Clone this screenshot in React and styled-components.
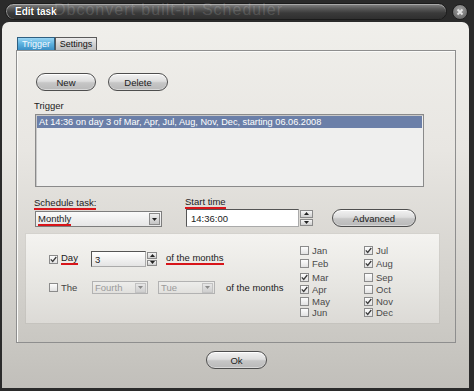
import React from 'react';
import styled, { createGlobalStyle } from 'styled-components';

const Global = createGlobalStyle`
  html, body { margin: 0; padding: 0; background: #2b2b2b; }
  body { font-family: "Liberation Sans", Arial, sans-serif; }
`;

const Window = styled.div`
  width: 474px;
  height: 391px;
  background: #2b2b2b;
  display: flex;
  flex-direction: column;
  overflow: hidden;
  font-family: "Liberation Sans", Arial, sans-serif;
  font-size: 9.5px;
  color: #1c1c1c;
`;

const TitleRow = styled.div`
  position: relative;
  height: 22px;
  box-sizing: border-box;
  display: flex;
  align-items: flex-start;
  padding: 3px 0 0 5px;
  gap: 5px;
`;

const TitlePill = styled.div`
  width: 442px;
  height: 17px;
  box-sizing: border-box;
  border-radius: 9px;
  border: 1px solid #1b1b1b;
  background: linear-gradient(#858585 0%, #5a5a5a 30%, #3a3a3a 60%, #2f2f2f 100%);
  box-shadow: inset 0 1px 0 #a9a9a9, inset 1px 0 0 #8a8a8a;
  display: flex;
  align-items: center;
  padding-left: 9px;
`;

const GhostTitle = styled.span`
  position: absolute;
  left: 54px;
  top: 1px;
  font-size: 16px;
  line-height: 18px;
  letter-spacing: 1px;
  color: rgba(255, 255, 255, 0.15);
  white-space: nowrap;
  pointer-events: none;
`;

const TitleText = styled.span`
  position: relative;
  z-index: 1;
  color: #fff;
  font-weight: bold;
  font-size: 10px;
  text-shadow: 0 0 1px #000;
`;

const CloseButton = styled.div`
  width: 16px;
  height: 16px;
  margin-top: 1px;
  box-sizing: border-box;
  border-radius: 50%;
  border: 1px solid #1e1e1e;
  background: radial-gradient(circle at 50% 35%, #a5a5a5, #6e6e6e 70%, #555);
  display: flex;
  align-items: center;
  justify-content: center;
`;

const Body = styled.div`
  margin-left: 2px;
  width: 467px;
  height: 366px;
  box-sizing: border-box;
  border-radius: 7px 7px 0 0;
  background: linear-gradient(#f0efeb 0%, #e8e6e2 35%, #d4d2cd 70%, #c1bfba 100%);
  padding: 15px 13px 0 14px;
  display: flex;
  flex-direction: column;
`;

const TabStrip = styled.div`
  display: flex;
  padding-left: 1px;
  height: 13px;
`;

const Tab = styled.div`
  height: 13px;
  width: ${p => p.$w}px;
  box-sizing: border-box;
  border: 1px solid ${p => (p.$active ? '#2f5f80' : '#5a5a5a')};
  border-bottom: none;
  text-align: center;
  font-size: 9px;
  line-height: 12px;
  background: ${p =>
    p.$active
      ? 'linear-gradient(#9ad6f4, #5bb0de 50%, #3a8fc6)'
      : 'linear-gradient(#ececec, #d2d2d2 50%, #bdbdbd)'};
  color: ${p => (p.$active ? '#f4fbff' : '#111')};
`;

const Panel = styled.div`
  height: 293px;
  box-sizing: border-box;
  border: 1px solid #8e8e8e;
  box-shadow: inset 1px 1px 0 #fbfbf9;
  padding: 22px 0 0 18px;
  display: flex;
  flex-direction: column;
`;

const ButtonRow = styled.div`
  display: flex;
  gap: 12px;
  margin-left: 1px;
`;

const PillButton = styled.button`
  width: ${p => p.$w}px;
  height: 18px;
  box-sizing: border-box;
  border-radius: 9px;
  border: 1px solid #4e4e4e;
  background: linear-gradient(#f2f2f2 0%, #dedede 45%, #c6c6c6 55%, #b9b9b9 100%);
  box-shadow: inset 0 1px 0 #fff, inset 0 -1px 0 #d8d8d8;
  font-family: inherit;
  font-size: 9.5px;
  color: #222;
  padding: 0;
  cursor: default;
`;

const FieldLabel = styled.div`
  margin-left: -1px;
  line-height: 11px;
  height: 11px;
  margin-top: ${p => p.$mt || 0}px;
`;

const ListBox = styled.div`
  margin-top: 3px;
  width: 389px;
  height: 73px;
  box-sizing: border-box;
  border: 1px solid #8a8a8a;
  box-shadow: inset 1px 1px 0 #c8c8c8;
  background: #efefee;
  padding: 1px;
`;

const ListItem = styled.div`
  height: 12px;
  line-height: 12px;
  padding-left: 2px;
  font-size: 9.2px;
  white-space: nowrap;
  background: ${p => (p.$selected ? '#6b7fa8' : 'transparent')};
  color: ${p => (p.$selected ? '#fff' : '#1c1c1c')};
`;

const FieldsRow = styled.div`
  display: flex;
  align-items: flex-end;
  margin-top: 9px;
`;

const Field = styled.div`
  width: ${p => p.$w}px;
  display: flex;
  flex-direction: column;
`;

const Underlined = styled.span`
  display: inline-block;
  line-height: 10px;
  border-bottom: 2px solid #d8151a;
  padding-bottom: ${p => p.$pb ?? 0}px;
`;

const SelectBox = styled.div`
  width: ${p => p.$w}px;
  height: ${p => p.$h || 15}px;
  box-sizing: border-box;
  margin-top: ${p => p.$mt || 0}px;
  border: 1px solid ${p => (p.$disabled ? '#b2b2b2' : '#7d7d7d')};
  background: ${p =>
    p.$disabled ? 'linear-gradient(#ededeb, #e1e0dd)' : 'linear-gradient(#fafafa, #e6e6e6)'};
  display: flex;
  align-items: center;
  justify-content: space-between;
  padding: 0 1px 0 2px;
  color: ${p => (p.$disabled ? '#9b9b9b' : '#1c1c1c')};
`;

const DropButton = styled.div`
  width: 11px;
  height: ${p => p.$h || 11}px;
  box-sizing: border-box;
  border: 1px solid ${p => (p.$disabled ? '#c2c2c2' : '#8a8a8a')};
  background: ${p =>
    p.$disabled ? 'linear-gradient(#e6e6e6, #cfcfcf)' : 'linear-gradient(#f0f0f0, #c4c4c4)'};
  display: flex;
  align-items: center;
  justify-content: center;
`;

const SpinBox = styled.div`
  width: ${p => p.$w}px;
  height: ${p => p.$h}px;
  box-sizing: border-box;
  display: flex;
  margin-top: ${p => p.$mt || 0}px;
`;

const SpinInput = styled.div`
  flex: 1;
  box-sizing: border-box;
  border: 1px solid #555;
  border-right-color: #aaa;
  border-bottom-color: #aaa;
  background: ${p => p.$bg || '#fff'};
  padding-left: ${p => p.$pl || 3}px;
  display: flex;
  align-items: center;
`;

const SpinButtons = styled.div`
  width: ${p => p.$w}px;
  display: flex;
  flex-direction: column;
  gap: 1px;
  padding: 1px 0 1px 1px;
  box-sizing: border-box;
`;

const SpinArrow = styled.div`
  flex: 1;
  box-sizing: border-box;
  border: 1px solid #8a8a8a;
  background: linear-gradient(#f6f6f6, #cfcfcf);
  display: flex;
  align-items: center;
  justify-content: center;
`;

const Group = styled.div`
  margin: 7px 0 0 -9px;
  width: 413px;
  height: 89px;
  box-sizing: border-box;
  background: linear-gradient(#f4f3f0, #e6e5e1 60%, #dcdad6);
  box-shadow: 0 0 0 1px rgba(0, 0, 0, 0.03);
  display: flex;
  padding: 12px 0 0 23px;
`;

const LeftArea = styled.div`
  width: 251px;
  display: flex;
  flex-direction: column;
  padding-top: 5px;
  gap: 14px;
`;

const OptionRow = styled.div`
  display: flex;
  align-items: center;
  height: ${p => p.$h}px;
`;

const CheckItem = styled.div`
  display: flex;
  align-items: center;
  gap: 3px;
  width: ${p => (p.$w ? `${p.$w}px` : 'auto')};
  height: ${p => (p.$h ? `${p.$h}px` : 'auto')};
  color: ${p => (p.$muted ? '#444' : 'inherit')};
  line-height: 10px;
`;

const Box = styled.span`
  width: 9px;
  height: 9px;
  flex: none;
  box-sizing: border-box;
  border: 1px solid #8b8b8b;
  background: linear-gradient(#fdfdfd, #e2e2e2);
  display: flex;
  align-items: center;
  justify-content: center;
`;

const Spacer = styled.span`
  width: ${p => p.$w}px;
  flex: none;
`;

const PlainText = styled.span`
  white-space: nowrap;
`;

const MonthGrid = styled.div`
  display: grid;
  grid-auto-flow: column;
  grid-template-rows: 13px 14px 12px 12px 11px 12px;
  grid-template-columns: 64px auto;
  color: #4a4a4a;
`;

const Footer = styled.div`
  display: flex;
  justify-content: center;
  padding-top: 8px;
  padding-left: 1px;
`;

const Check = () => (
  <svg width="7" height="7" viewBox="0 0 7 7">
    <path d="M0.8 3.4 L2.7 5.4 L6.3 1" fill="none" stroke="#3a3a3a" strokeWidth="1.3" />
  </svg>
);

const CheckBox = ({ checked }) => <Box>{checked ? <Check /> : null}</Box>;

const Tri = ({ up, color = '#222' }) => (
  <svg width="5" height="3" viewBox="0 0 5 3">
    <path d={up ? 'M0 3 L2.5 0 L5 3 Z' : 'M0 0 L5 0 L2.5 3 Z'} fill={color} />
  </svg>
);

const Dropdown = ({ w, h, mt, disabled, children, btnH }) => (
  <SelectBox $w={w} $h={h} $mt={mt} $disabled={disabled}>
    <span>{children}</span>
    <DropButton $disabled={disabled} $h={btnH}>
      <Tri color={disabled ? '#8a8a8a' : '#222'} />
    </DropButton>
  </SelectBox>
);

const Spinner = ({ w, h, mt, btnW, bg, pl, children }) => (
  <SpinBox $w={w} $h={h} $mt={mt}>
    <SpinInput $bg={bg} $pl={pl}>{children}</SpinInput>
    <SpinButtons $w={btnW}>
      <SpinArrow><Tri up /></SpinArrow>
      <SpinArrow><Tri /></SpinArrow>
    </SpinButtons>
  </SpinBox>
);

const months = [
  ['Jan', false], ['Feb', false], ['Mar', true], ['Apr', true], ['May', false], ['Jun', false],
  ['Jul', true], ['Aug', true], ['Sep', false], ['Oct', false], ['Nov', true], ['Dec', true],
];

export default function App() {
  return (
    <>
      <Global />
      <Window>
        <TitleRow>
          <GhostTitle>Dbconvert built-in Scheduler</GhostTitle>
          <TitlePill>
            <TitleText>Edit task</TitleText>
          </TitlePill>
          <CloseButton>
            <svg width="8" height="8" viewBox="0 0 8 8">
              <path d="M1.5 1.5 L6.5 6.5 M6.5 1.5 L1.5 6.5" stroke="#e4e4e4" strokeWidth="1.8" />
            </svg>
          </CloseButton>
        </TitleRow>
        <Body>
          <TabStrip>
            <Tab $active $w={38}>Trigger</Tab>
            <Tab $w={42}>Settings</Tab>
          </TabStrip>
          <Panel>
            <ButtonRow>
              <PillButton $w={60}>New</PillButton>
              <PillButton $w={60}>Delete</PillButton>
            </ButtonRow>
            <FieldLabel $mt={9}>Trigger</FieldLabel>
            <ListBox>
              <ListItem $selected>
                At 14:36 on day 3 of Mar, Apr, Jul, Aug, Nov, Dec, starting 06.06.2008
              </ListItem>
            </ListBox>
            <FieldsRow>
              <Field $w={151}>
                <FieldLabel><Underlined>Schedule task:</Underlined></FieldLabel>
                <Dropdown w={127} h={16} mt={3} btnH={12}>
                  <Underlined $pb={0}>Monthly</Underlined>
                </Dropdown>
              </Field>
              <Field $w={146}>
                <FieldLabel><Underlined>Start time</Underlined></FieldLabel>
                <Spinner w={127} h={18} mt={2} btnW={14} pl={4}>14:36:00</Spinner>
              </Field>
              <PillButton $w={84}>Advanced</PillButton>
            </FieldsRow>
            <Group>
              <LeftArea>
                <OptionRow $h={16}>
                  <CheckItem $w={42}>
                    <CheckBox checked />
                    <Underlined>Day</Underlined>
                  </CheckItem>
                  <Spinner w={66} h={16} btnW={11} bg="linear-gradient(#fff, #e4e4e4)">3</Spinner>
                  <Spacer $w={9} />
                  <Underlined>of the months</Underlined>
                </OptionRow>
                <OptionRow $h={13}>
                  <CheckItem $w={43} $muted>
                    <CheckBox />
                    <PlainText>The</PlainText>
                  </CheckItem>
                  <Dropdown w={56} h={13} disabled btnH={10}>Fourth</Dropdown>
                  <Spacer $w={10} />
                  <Dropdown w={57} h={13} disabled btnH={10}>Tue</Dropdown>
                  <Spacer $w={11} />
                  <PlainText>of the months</PlainText>
                </OptionRow>
              </LeftArea>
              <MonthGrid>
                {months.map(([m, c]) => (
                  <CheckItem key={m} $h={9}>
                    <CheckBox checked={c} />
                    <PlainText>{m}</PlainText>
                  </CheckItem>
                ))}
              </MonthGrid>
            </Group>
          </Panel>
          <Footer>
            <PillButton $w={61}>Ok</PillButton>
          </Footer>
        </Body>
      </Window>
    </>
  );
}
